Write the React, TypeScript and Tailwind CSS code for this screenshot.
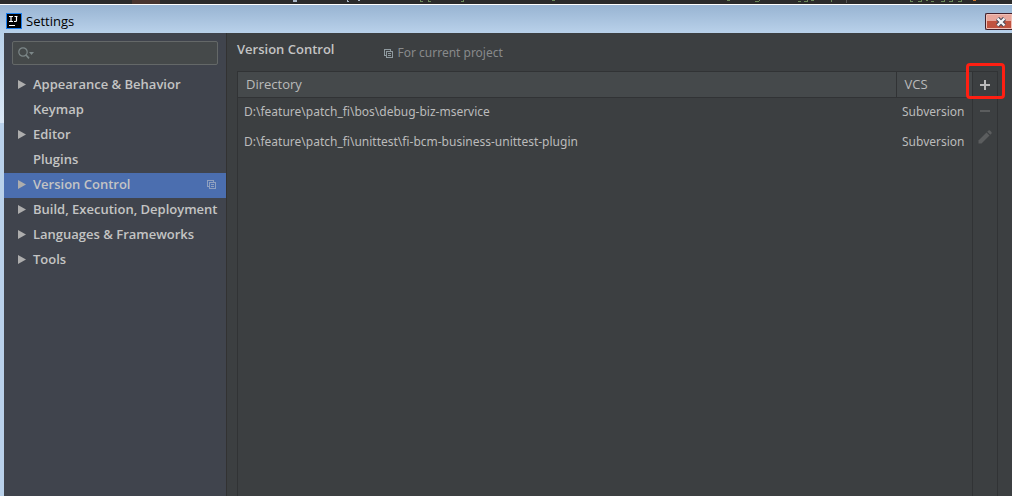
import { clsx } from 'clsx'

interface NavItem {
    label:       string
    expandable?: boolean
    selected?:   boolean
}

interface VcsMapping {
    directory: string
    vcs:       string
}

const NAV_ITEMS: NavItem[] = [
    { label: 'Appearance & Behavior', expandable: true },
    { label: 'Keymap' },
    { label: 'Editor', expandable: true },
    { label: 'Plugins' },
    { label: 'Version Control', expandable: true, selected: true },
    { label: 'Build, Execution, Deployment', expandable: true },
    { label: 'Languages & Frameworks', expandable: true },
    { label: 'Tools', expandable: true },
]

const MAPPINGS: VcsMapping[] = [
    { directory: 'D:\\feature\\patch_fi\\bos\\debug-biz-mservice', vcs: 'Subversion' },
    { directory: 'D:\\feature\\patch_fi\\unittest\\fi-bcm-business-unittest-plugin', vcs: 'Subversion' },
]

function ProjectIcon({ className }: { className?: string }) {
    return (
        <svg className={clsx('w-[9px] h-[9px] flex-shrink-0', className)} viewBox="0 0 9 9" fill="none" stroke="currentColor" shapeRendering="crispEdges">
            <path d="M2.5 6.5H.5V.5H6.5V2.5" />
            <path d="M2.5 2.5H8.5V8.5H2.5Z" />
            <path d="M4 4.5H7M4 6.5H7" />
        </svg>
    )
}

function AppLogo() {
    return (
        <svg className="w-4 h-4 flex-shrink-0" viewBox="0 0 16 16" fill="none">
            <rect x=".5" y=".5" width="15" height="15" fill="#000" stroke="#1b7ff0" />
            <path d="M3 3.5H7M5 3.5V8.5M3 8.5H7M8.5 3.5H11.5M10.5 3.5V7.5Q10.5 8.5 9.5 8.5H8" stroke="#fff" strokeWidth="1.2" />
            <path d="M3 12.5H9" stroke="#fff" />
        </svg>
    )
}

// sliver of the editor that shows above the dialog
function EditorStrip() {
    return (
        <div aria-hidden="true" className="flex h-1 bg-[#2b2b2b] pl-[132px]">
            <div className="w-7 bg-[#49352f]" />
            <svg className="ml-[133px] w-[690px] h-1 flex-shrink-0" viewBox="0 0 690 4" fill="none" shapeRendering="crispEdges">
                <path d="M0 .5H4M0 1.5H4M54 0V1.5H56M65 .5H67" stroke="#a9b7c6" />
                <path d="M127 0V1.5H130M135 0V1.5H138M168 1.5H170L171 0M259 .5H262M434 .5H437M462 1.5H466M466 0V1M505 1.5H508M511 1.5H514V0M518 .5H521M538 0V2" stroke="#6a8759" />
                <path d="M617 0V1.5H620M625 1.5H628V0M633 .5H635M638 1.5H641M648 1.5H651V0M656 1.5H659V0M665 1.5H668V0" stroke="#6a8759" />
                <path d="M553.5 0V3" stroke="#555555" />
                <path d="M680 .5H683" stroke="#cc7832" />
            </svg>
        </div>
    )
}

function TitleBar() {
    return (
        <header className="flex h-7 items-center bg-linear-to-b from-[#98b4d2] to-[#b9d1ea] pl-[6px]">
            <div className="flex flex-1 items-center gap-1 pt-1">
                <AppLogo />
                <h1 className="text-[13px] leading-4 text-black">Settings</h1>
            </div>
            <button
                aria-label="Close"
                className="flex h-[17px] w-[27px] items-center justify-center self-end mb-[3px] rounded-l-xs border border-r-0 border-[#43202a] bg-linear-to-b from-[#e8a79c] from-50% to-[#c05340] to-50% pl-1 inset-shadow-[0_0_0_1px_#f0c0b8]"
            >
                <svg className="w-3 h-[10px]" viewBox="0 0 12 10" fill="none">
                    <path d="M2.5 1.5L9.5 8.5M9.5 1.5L2.5 8.5" stroke="#4a4a58" strokeWidth="4.4" />
                    <path d="M2.5 1.5L9.5 8.5M9.5 1.5L2.5 8.5" stroke="#f4f4f6" strokeWidth="2.4" />
                </svg>
            </button>
        </header>
    )
}

function SearchBox() {
    return (
        <label className="m-2 flex h-6 items-center rounded-xs border border-[#646868] bg-[#45494a] pl-[5px]">
            <svg className="w-4 h-3 flex-shrink-0" viewBox="0 0 16 12" fill="none">
                <circle cx="5" cy="5" r="4.2" stroke="#7c8788" strokeWidth="1.2" />
                <path d="M8 8L11 11.4" stroke="#7c8788" strokeWidth="1.6" />
                <path d="M11 5H16L13.5 8Z" fill="#7c8788" />
            </svg>
            <input type="text" aria-label="Search settings" className="min-w-0 flex-1 bg-transparent text-[13px] text-[#bbbbbb] outline-none" />
        </label>
    )
}

function NavRow({ item }: { item: NavItem }) {
    return (
        <li>
            <button
                className={clsx(
                    'flex h-[25px] w-full items-center pb-[3px] pl-[14px] pr-[10px] text-left text-[13px] font-semibold leading-4 whitespace-nowrap text-[#c4c4c4]',
                    item.selected && 'bg-[#4b6eaf]',
                )}
            >
                <span className="w-[15px] flex-shrink-0">
                    {item.expandable && (
                        <svg className="block w-2 h-[9px]" viewBox="0 0 8 9">
                            <path d="M0 0L8 4.5L0 9Z" fill="#adadad" />
                        </svg>
                    )}
                </span>
                <span className="flex-1">{item.label}</span>
                {item.selected && <ProjectIcon className="text-[#8fa0c0]" />}
            </button>
        </li>
    )
}

function Sidebar() {
    return (
        <nav aria-label="Settings sections" className="w-[223px] flex-shrink-0 border-r border-[#323232] bg-[#40444d]">
            <SearchBox />
            <ul>
                {NAV_ITEMS.map(item => <NavRow key={item.label} item={item} />)}
            </ul>
        </nav>
    )
}

function MappingTable() {
    return (
        <table className="w-full table-fixed border-collapse self-start text-left leading-4 text-[#bbbbbb]">
            <thead className="text-[13px]">
                <tr className="h-[25px] border-b border-[#313335] bg-[#45494b]">
                    <th className="pl-2 font-normal">Directory</th>
                    <th className="w-[76px] border-l border-[#313335] pl-2 font-normal">VCS</th>
                </tr>
            </thead>
            <tbody className="font-['Noto_Sans',sans-serif] text-[12px]">
                {MAPPINGS.map(row => (
                    <tr key={row.directory} className="h-[30px]">
                        <td className="pl-[6px]">{row.directory}</td>
                        <td className="pl-[6px]">{row.vcs}</td>
                    </tr>
                ))}
            </tbody>
        </table>
    )
}

function TableActions() {
    return (
        <div className="flex w-[26px] flex-shrink-0 flex-col items-center border-x border-[#313335]">
            <button aria-label="Add" className="relative flex h-[26px] w-full items-center justify-center text-[#bbbbbb]">
                <svg className="w-[10px] h-[10px]" viewBox="0 0 10 10" fill="currentColor">
                    <path d="M4 0H6V4H10V6H6V10H4V6H0V4H4Z" />
                </svg>
                {/* red marker round the add button */}
                <span className="absolute -left-[7px] -right-2 -top-[9px] -bottom-[1px] rounded-sm border-3 border-[#ff1f12]" />
            </button>
            <button aria-label="Remove" className="flex h-[26px] w-full items-center justify-center text-[#5b5d5e]">
                <svg className="w-[10px] h-[2px]" viewBox="0 0 10 2" fill="currentColor">
                    <path d="M0 0H10V2H0Z" />
                </svg>
            </button>
            <button aria-label="Edit" className="flex h-[26px] w-full items-center justify-center text-[#5b5d5e]">
                <svg className="w-[14px] h-[14px]" viewBox="0 0 14 14" fill="currentColor">
                    <path d="M.5 10.5L8.5 2.5L11.5 5.5L3.5 13.5H.5Z" />
                    <path d="M9.3 1.7L10.5.5Q11.2 0 12 .6L13.4 2Q14 2.8 13.5 3.5L12.3 4.7Z" />
                </svg>
            </button>
        </div>
    )
}

function VersionControlPage() {
    return (
        <main className="flex min-w-0 flex-1 flex-col pl-[10px] pr-[14px]">
            <div className="flex h-[38px] items-start gap-[50px] pt-2">
                <h2 className="text-[13px] font-semibold leading-4 text-[#c4c4c4]">Version Control</h2>
                <p className="flex items-center gap-1 pt-1 font-['Noto_Sans',sans-serif] text-[12px] leading-4 text-[#888a8b]">
                    <ProjectIcon className="text-[#8f9a9f]" />
                    For current project
                </p>
            </div>
            <div className="flex flex-1 border-l border-t border-[#313335]">
                <MappingTable />
                <TableActions />
            </div>
        </main>
    )
}

export default function App() {
    return (
        <div className="flex min-h-screen flex-col bg-[#b9d1ea] font-['Open_Sans','Noto_Sans',sans-serif]">
            <EditorStrip />
            <div className="border-t border-white">
                <TitleBar />
            </div>
            <div className="flex flex-1 bg-[#3c3f41]">
                <div className="w-1 flex-shrink-0 bg-[#b9d1ea]">
                    <div className="h-[90px] bg-linear-to-b from-[#b9d1ea] to-[#dbe8f6]" />
                </div>
                <Sidebar />
                <VersionControlPage />
            </div>
        </div>
    )
}
